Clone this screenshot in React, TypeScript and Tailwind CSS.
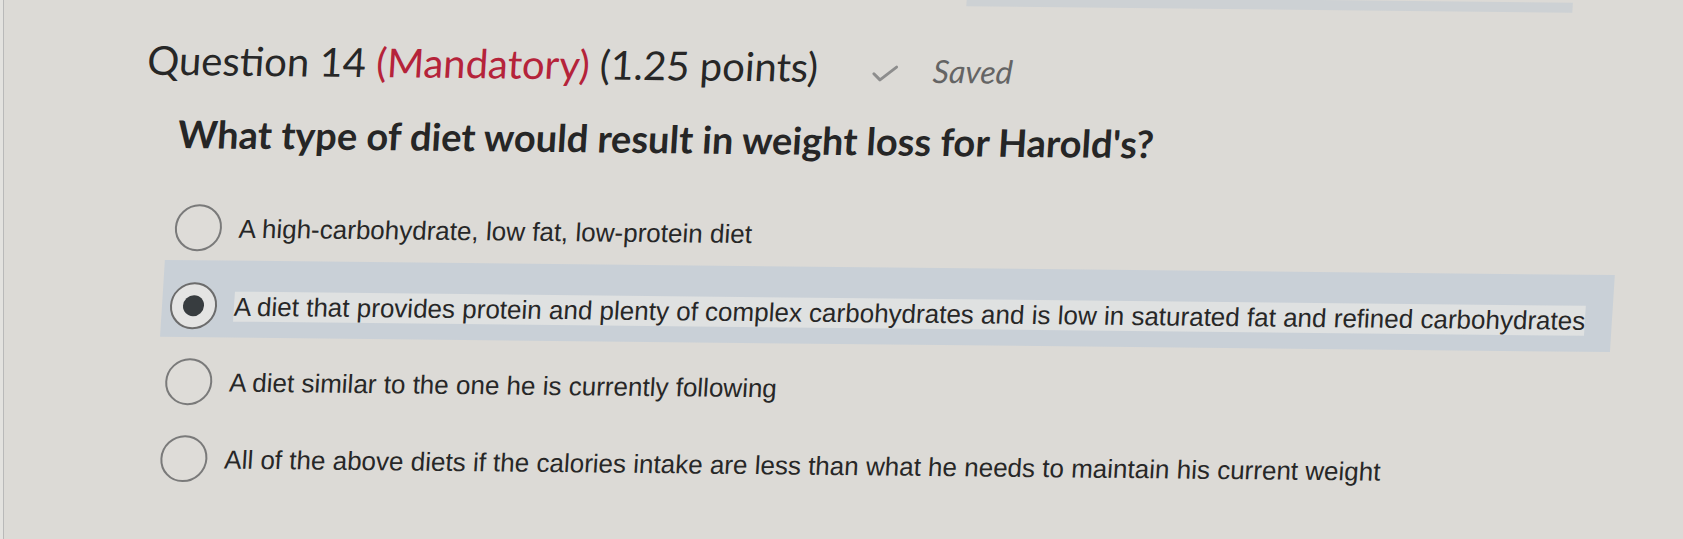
import React from "react";

const options = [
  "A high-carbohydrate, low fat, low-protein diet",
  "A diet that provides protein and plenty of complex carbohydrates and is low in saturated fat and refined carbohydrates",
  "A diet similar to the one he is currently following",
  "All of the above diets if the calories intake are less than what he needs to maintain his current weight",
];

function Radio({ selected }: { selected: boolean }) {
  return (
    <div
      className={
        "w-[47px] h-[47px] shrink-0 rounded-full border-2 flex items-center justify-center " +
        (selected ? "border-[#6c6c6c] bg-[#e4e4e3]" : "border-[#7a7a7a] bg-[#dedcd8]")
      }
    >
      {selected && <div className="w-[21px] h-[21px] rounded-full bg-[#373c3f]" />}
    </div>
  );
}

export default function App() {
  return (
    <div className="w-[1683px] h-[539px] overflow-hidden bg-[#dcdad6] shadow-[inset_3px_0_0_#e3e2df,inset_4px_0_0_#b9b9b9]">
      <div className="h-full [transform:rotate(0.6deg)_skewX(-3deg)]">
        <div className="h-[10px] -mt-[5px] ml-[950px] w-[606px] bg-[#cdd1d4]" />

        <div className="mt-[38px] pl-[135px] flex items-baseline font-['Lato',sans-serif]">
          <span className="text-[40px] leading-[48px] text-[#272727]">
            Question 14 <span className="text-[#b5233a]">(Mandatory)</span> (1.25 points)
          </span>
          <span className="ml-[54px] mr-[35px]">
            <svg width="26" height="18" viewBox="0 0 28 18" fill="none">
              <path d="M2 9.5 L9 16 L26 2" stroke="#8d8d8d" strokeWidth="3.2" strokeLinecap="round" strokeLinejoin="round" />
            </svg>
          </span>
          <span className="text-[32px] italic text-[#646464]">Saved</span>
        </div>

        <div className="mt-[23px] pl-[170px] font-['Lato',sans-serif] font-bold text-[38px] leading-[46px] text-[#262626]">
          What type of diet would result in weight loss for Harold's?
        </div>

        <div className="mt-[27px] ml-[165px] w-[1450px] flex flex-col font-['Liberation_Sans',Arial,sans-serif] text-[26px] text-[#272727]">
          {options.map((opt, i) => (
            <div
              key={i}
              className={
                "h-[77px] pl-[8px] flex items-center gap-[17px] " +
                (i === 1 ? "bg-[#c9d0d7] pt-[14px]" : "pt-3")
              }
            >
              <Radio selected={i === 1} />
              <span className={"whitespace-nowrap leading-[30px] " + (i === 1 ? "bg-[#dfe1e1]" : "")}>{opt}</span>
            </div>
          ))}
        </div>
      </div>
    </div>
  );
}
